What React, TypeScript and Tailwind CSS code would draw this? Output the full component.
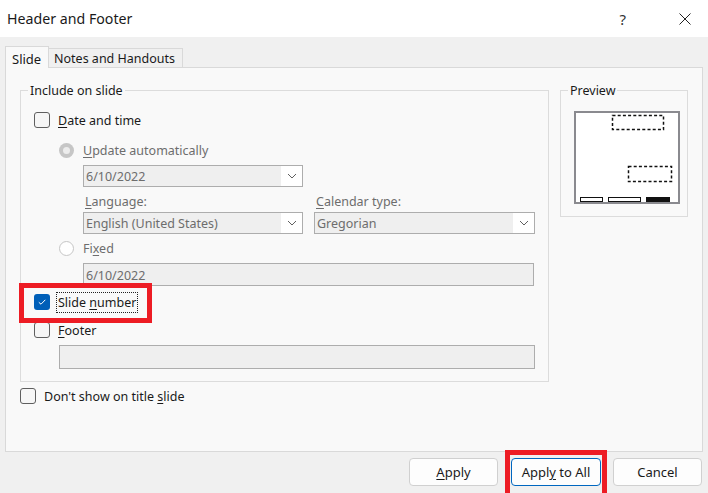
import React from "react";

function Box({ checked }: { checked?: boolean }) {
  if (checked) {
    return (
      <span className="w-4 h-4 rounded-[3px] bg-[#005fb8] flex items-center justify-center shrink-0">
        <svg width="10" height="8" viewBox="0 0 10 8">
          <path d="M1.8 4.3 L4 6.2 L8.3 1.8" stroke="white" strokeWidth="1" fill="none" />
        </svg>
      </span>
    );
  }
  return <span className="w-4 h-4 rounded-[3px] border border-[#5f5f5f] bg-[#f6f6f6] shrink-0" />;
}

function Chevron() {
  return (
    <svg width="10" height="6" viewBox="0 0 10 6">
      <path d="M1 1 L5 5 L9 1" stroke="#606060" strokeWidth="1" fill="none" />
    </svg>
  );
}

function Combo({ text, className }: { text: string; className: string }) {
  return (
    <div className={"h-[22px] border border-[#adadad] bg-[#efefef] flex items-stretch " + className}>
      <span className="flex-1 pl-[2px] pt-[2px] text-[#6d6d6d] flex items-center">{text}</span>
      <span className="w-[21px] bg-white flex items-center justify-center">
        <Chevron />
      </span>
    </div>
  );
}

export default function App() {
  return (
    <div className="w-[708px] h-[493px] overflow-hidden relative bg-[#f0f0f0] flex flex-col font-['Noto_Sans',sans-serif] text-[12.5px] text-[#1a1a1a] leading-[18px]">
      {/* Title bar */}
      <div className="h-[37px] bg-white flex items-center pl-[7px] pr-[17px] shrink-0">
        <span className="text-[14.2px] text-[#1a1a1a]">Header and Footer</span>
        <span className="ml-auto text-[15px] text-[#333]">?</span>
        <span className="ml-[53px] flex items-center">
          <svg width="12" height="12" viewBox="0 0 12 12">
            <path d="M0.5 0.5 L11.5 11.5 M11.5 0.5 L0.5 11.5" stroke="#222" strokeWidth="1" />
          </svg>
        </span>
      </div>

      {/* Body */}
      <div className="flex flex-col px-[5px]">
        {/* Tabs */}
        <div className="mt-[9px] h-[22px] flex items-end relative z-10 -mb-px">
          <div className="h-[22px] w-[44px] bg-[#f9f9f9] border-l border-t border-r border-[#d9d9d9] pl-[6px] pt-[2px] flex items-center text-[13px]">
            Slide
          </div>
          <div className="h-[19px] mb-px w-[134px] border-t border-r border-[#d9d9d9] bg-[#f0f0f0] pl-[5px] pt-[2px] flex items-center">
            Notes and Handouts
          </div>
        </div>

        {/* Panel */}
        <div className="h-[385px] border border-[#d9d9d9] bg-[#f9f9f9] pl-[14px] pt-[22px] flex flex-col">
          <div className="flex items-start">
            {/* Include on slide group */}
            <div className="relative w-[529px] h-[292px] border border-[#dcdcdc] flex flex-col">
              <span className="absolute top-[-9px] left-[7px] px-[2px] bg-[#f9f9f9]">Include on slide</span>

              <div className="mt-[17px] h-[24px] flex items-center pl-[13px] gap-[8px]">
                <Box />
                <span className="pt-[2px]">
                  <u className="underline-offset-2">D</u>ate and time
                </span>
              </div>

              <div className="mt-[6px] h-[24px] flex items-center pl-[38px] gap-[9px] text-[#6d6d6d]">
                <span className="w-[15px] h-[15px] rounded-full bg-[#c6c6c6] flex items-center justify-center">
                  <span className="w-[7px] h-[7px] rounded-full bg-[#ececec]" />
                </span>
                <span className="pt-[2px]">
                  <u className="underline-offset-2">U</u>pdate automatically
                </span>
              </div>

              <Combo text="6/10/2022" className="mt-[3px] ml-[62px] w-[220px]" />

              <div className="mt-[6px] h-[16px] flex items-center ml-[64px] pt-[2px] text-[#6d6d6d]">
                <span className="w-[231px]">
                  <u className="underline-offset-2">L</u>anguage:
                </span>
                <span>
                  <u className="underline-offset-2">C</u>alendar type:
                </span>
              </div>

              <div className="mt-[3px] flex ml-[62px]">
                <Combo text="English (United States)" className="w-[220px]" />
                <Combo text="Gregorian" className="ml-[11px] w-[221px]" />
              </div>

              <div className="mt-[4px] h-[20px] flex items-center pl-[38px] gap-[9px] text-[#6d6d6d]">
                <span className="w-[15px] h-[15px] rounded-full border border-[#c6c6c6] bg-white" />
                <span className="pt-[2px]">
                  Fi<u className="underline-offset-2">x</u>ed
                </span>
              </div>

              <div className="mt-[5px] ml-[62px] w-[451px] h-[23px] border border-[#adadad] bg-[#efefef] flex items-center pl-[2px] pt-[2px] text-[#6d6d6d]">
                6/10/2022
              </div>

              <div className="mt-[6px] h-[20px] flex items-center pl-[13px] gap-[6px]">
                <Box checked />
                <span className="border border-dotted border-[#222] px-[1px] pt-[1px] leading-[18px]">
                  Slide <u className="underline-offset-2">n</u>umber
                </span>
              </div>

              <div className="mt-[8px] h-[20px] flex items-center pl-[13px] gap-[8px]">
                <Box />
                <span className="pt-[2px]">
                  <u className="underline-offset-2">F</u>ooter
                </span>
              </div>

              <div className="mt-[5px] ml-[38px] w-[476px] h-[24px] border border-[#adadad] bg-[#efefef]" />
            </div>

            {/* Preview group */}
            <div className="relative ml-[11px] w-[128px] h-[127px] border border-[#dcdcdc] flex flex-col">
              <span className="absolute top-[-9px] left-[7px] px-[2px] bg-[#f9f9f9]">Preview</span>
              <svg className="mt-[20px] ml-[13px]" width="106" height="93" viewBox="0 0 106 93">
                <rect x="1" y="1" width="104" height="91" fill="white" stroke="#8a8a8f" strokeWidth="2" />
                <rect x="38.5" y="4.5" width="51" height="14" fill="none" stroke="#111" strokeWidth="1.5" strokeDasharray="3 2.2" />
                <rect x="54.5" y="55.5" width="43" height="15" fill="none" stroke="#111" strokeWidth="1.5" strokeDasharray="3 2.2" />
                <rect x="6.5" y="86.5" width="22" height="4" fill="white" stroke="#111" strokeWidth="1" />
                <rect x="34.5" y="86.5" width="32" height="4" fill="white" stroke="#111" strokeWidth="1" />
                <rect x="72" y="86" width="24" height="5" fill="#111" />
              </svg>
            </div>
          </div>

          <div className="mt-[4px] h-[20px] flex items-center gap-[8px]">
            <Box />
            <span className="pt-[2px]">
              Don't show on title <u className="underline-offset-2">s</u>lide
            </span>
          </div>
        </div>

        {/* Buttons */}
        <div className="mt-[6px] h-[28px] flex justify-end pr-[1px] text-[13px]">
          <button className="w-[89px] h-[28px] rounded-[4px] border border-[#d0d0d0] bg-[#fdfdfd] flex items-center justify-center">
            <span>
              <u className="underline-offset-2">A</u>pply
            </span>
          </button>
          <button className="ml-[13px] w-[90px] h-[28px] rounded-[4px] border border-[#0067c0] bg-[#fdfdfd] flex items-center justify-center">
            <span>
              Appl<u className="underline-offset-2">y</u> to All
            </span>
          </button>
          <button className="ml-[12px] w-[89px] h-[28px] rounded-[4px] border border-[#d0d0d0] bg-[#fdfdfd] flex items-center justify-center">
            Cancel
          </button>
        </div>
      </div>

      {/* Red annotation boxes */}
      <div className="absolute left-[19px] top-[283px] w-[133px] h-[40px] border-[5px] border-[#ed1c24]" />
      <div className="absolute left-[505px] top-[450px] w-[102px] h-[50px] border-[5px] border-[#ed1c24]" />
    </div>
  );
}
